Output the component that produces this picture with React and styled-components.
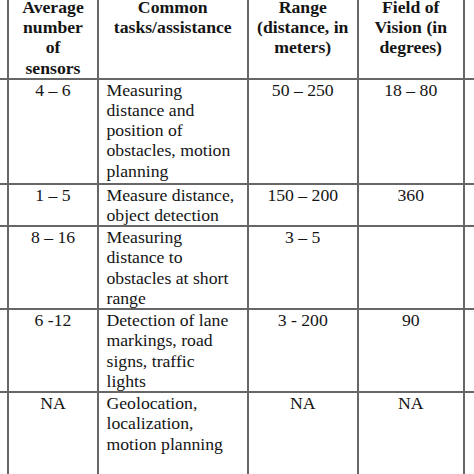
import React from 'react'
import styled, { createGlobalStyle } from 'styled-components'

const GlobalStyle = createGlobalStyle`
  html, body {
    margin: 0;
    padding: 0;
    background: #fff;
  }
`

const Page = styled.div`
  width: 474px;
  height: 474px;
  overflow: hidden;
  background: #fff;
`

const Table = styled.table`
  border-collapse: collapse;
  table-layout: fixed;
  width: 575.5px;
  margin: -3px 0 0 -53px;
  font-family: "Liberation Serif", "Times New Roman", serif;
  font-size: 17.7px;
  line-height: 20.2px;
  color: #151515;
`

const Col = styled.col`
  width: ${p => p.$w}px;
`

const Row = styled.tr`
  height: ${p => (p.$h ? `${p.$h}px` : 'auto')};
`

const HeadCell = styled.th`
  font-weight: 700;
  text-align: center;
  vertical-align: top;
  padding: 0 ${p => p.$pad || 4}px;
  border: 2px solid #676767;
  border-top: none;
`

const Cell = styled.td`
  text-align: ${p => (p.$left ? 'left' : 'center')};
  vertical-align: top;
  padding: ${p => (p.$left ? '0 10px 0 7.5px' : '0 4px')};
  border: 2px solid #676767;
`

const columns = [60, 90, 149.5, 110.5, 105.5, 60]

const headers = [
  { text: 'Average number of sensors', pad: 7 },
  { text: 'Common tasks/assistance' },
  { text: 'Range (distance, in meters)' },
  { text: 'Field of Vision (in degrees)' },
]

const rows = [
  { h: 105, count: '4 – 6', task: 'Measuring distance and position of obstacles, motion planning', range: '50 – 250', fov: '18 – 80' },
  { h: 41, count: '1 – 5', task: 'Measure distance, object detection', range: '150 – 200', fov: '360' },
  { h: 83, count: '8 – 16', task: 'Measuring distance to obstacles at short range', range: '3 – 5', fov: '' },
  { h: 83, count: '6 -12', task: 'Detection of lane markings, road signs, traffic lights', range: '3 - 200', fov: '90' },
  { h: 110, count: 'NA', task: 'Geolocation, localization, motion planning', range: 'NA', fov: 'NA' },
]

const App = () => {
  return (
    <Page>
      <GlobalStyle />
      <Table>
        <colgroup>
          {columns.map((w, i) => <Col key={i} $w={w} />)}
        </colgroup>
        <thead>
          <tr>
            <HeadCell />
            {headers.map(h => (
              <HeadCell key={h.text} $pad={h.pad}>{h.text}</HeadCell>
            ))}
            <HeadCell />
          </tr>
        </thead>
        <tbody>
          {rows.map((r, i) => (
            <Row key={i} $h={r.h}>
              <Cell />
              <Cell>{r.count}</Cell>
              <Cell $left>{r.task}</Cell>
              <Cell>{r.range}</Cell>
              <Cell>{r.fov}</Cell>
              <Cell />
            </Row>
          ))}
        </tbody>
      </Table>
    </Page>
  )
}

export default App
